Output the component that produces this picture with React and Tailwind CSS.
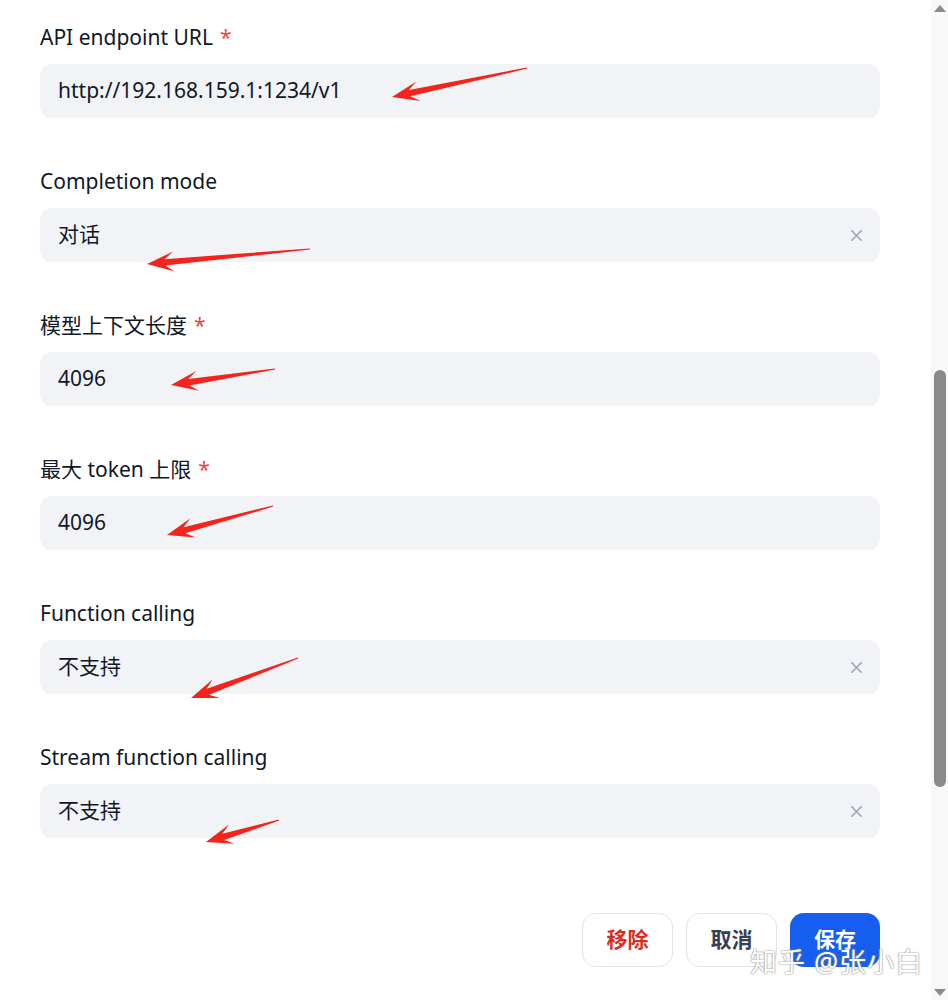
import { X } from 'lucide-react'

const fields = [
  { label: 'API endpoint URL', required: true, value: 'http://192.168.159.1:1234/v1' },
  { label: 'Completion mode', value: '对话', select: true },
  { label: '模型上下文长度', required: true, value: '4096' },
  { label: '最大 token 上限', required: true, value: '4096' },
  { label: 'Function calling', value: '不支持', select: true },
  { label: 'Stream function calling', value: '不支持', select: true },
]

// red annotation arrows: [tipX, tipY, tailX, tailY]
const arrows = [
  [392, 97, 527, 68],
  [147, 264, 310, 249],
  [171, 385, 275, 369],
  [167, 535, 273, 506],
  [191, 698, 298, 658],
  [206, 842, 279, 820],
]

function arrowPoints([x1, y1, x2, y2]) {
  const len = Math.hypot(x2 - x1, y2 - y1)
  const ux = (x2 - x1) / len
  const uy = (y2 - y1) / len
  const nx = -uy
  const ny = ux
  const H = 24
  const W = 10
  const s = 3.2
  const p = (d, w) => `${(x1 + ux * d + nx * w).toFixed(1)},${(y1 + uy * d + ny * w).toFixed(1)}`
  return [
    `${x1},${y1}`,
    p(H + 3, W),
    p(H - 6, s),
    `${(x2 + nx * 0.6).toFixed(1)},${(y2 + ny * 0.6).toFixed(1)}`,
    `${(x2 - nx * 0.6).toFixed(1)},${(y2 - ny * 0.6).toFixed(1)}`,
    p(H - 6, -s),
    p(H + 3, -W),
  ].join(' ')
}

function Field({ label, required, value, select }) {
  return (
    <div>
      <div className="h-7 leading-7 text-[21px] text-[#101828]">
        {label}
        {required && <span className="ml-[7px] text-[#f04438]">*</span>}
      </div>
      <div className="mt-[13px] h-[54px] rounded-xl bg-[#f2f3f6] flex items-center justify-between pl-[18px] pr-[14px] text-[21px] text-[#101828]">
        <span>{value}</span>
        {select && <X className="w-[19px] h-[19px] text-[#98a2b3]" strokeWidth={1.8} />}
      </div>
    </div>
  )
}

export default function App() {
  return (
    <div className="relative flex h-[1000px] w-[948px] overflow-hidden bg-white font-['Noto_Sans','Noto_Sans_CJK_SC',sans-serif]">
      {/* form */}
      <div className="flex-1 pl-10 pr-[51px] pt-[23px]">
        <div className="flex flex-col gap-[49px]">
          {fields.map((f, i) => (
            <Field key={i} {...f} />
          ))}
        </div>

        <div className="mt-[75px] flex justify-end gap-[13px]">
          <button className="h-[54px] w-[91px] rounded-[14px] border border-[#e0e2e7] bg-white text-[21px] font-bold text-[#d92d20]">
            移除
          </button>
          <button className="h-[54px] w-[91px] rounded-[14px] border border-[#e0e2e7] bg-white text-[21px] font-bold text-[#354052]">
            取消
          </button>
          <button className="h-[54px] w-[90px] rounded-[14px] bg-[#155eef] text-[21px] font-bold text-white">
            保存
          </button>
        </div>
      </div>

      {/* scrollbar */}
      <div className="flex w-[17px] flex-col items-center bg-[#f8f8f8]">
        <div className="mt-[5px] h-0 w-0 border-x-[6px] border-b-[7px] border-x-transparent border-b-[#8a8a8a]" />
        <div className="mt-[358px] h-[417px] w-3 rounded-full bg-[#8a8a8a]" />
        <div className="flex-1" />
        <div className="mb-[4px] h-0 w-0 border-x-[6px] border-t-[7px] border-x-transparent border-t-[#8a8a8a]" />
      </div>

      {/* annotations */}
      <svg className="pointer-events-none absolute inset-0" width="948" height="1000">
        {arrows.map((a, i) => (
          <polygon key={i} points={arrowPoints(a)} fill="#f2241c" />
        ))}
      </svg>

      <div className="pointer-events-none absolute left-[750px] top-[944px] text-[27px] leading-9 tracking-[1px] text-white [text-shadow:0_0_1px_#777,0_0_2px_#999]">
        知乎 @张小白
      </div>
    </div>
  )
}
